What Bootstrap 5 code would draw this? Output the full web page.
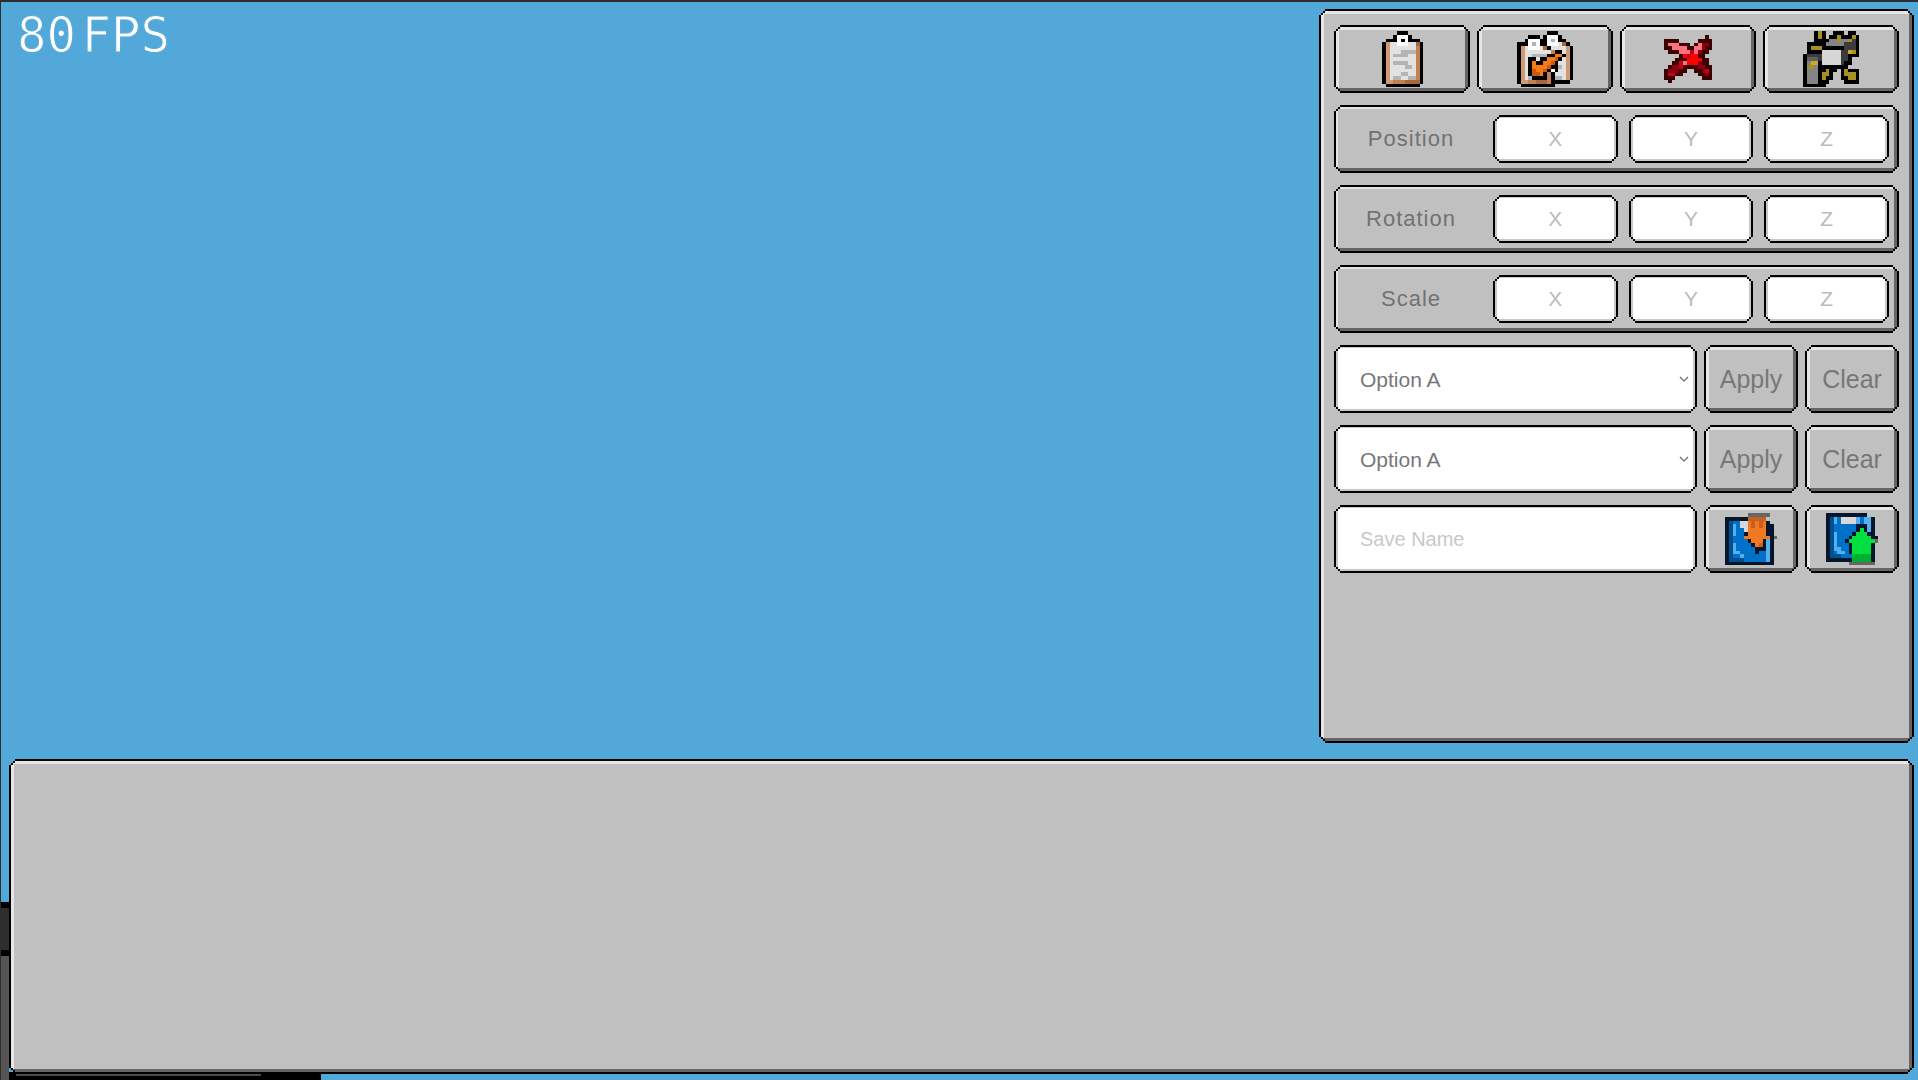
<!DOCTYPE html>
<html lang="en">
<head>
    <meta charset="UTF-8">
    <meta name="viewport" content="width=device-width, initial-scale=1.0">
    <title>Scene Editor</title>
    <link href="https://cdn.jsdelivr.net/npm/bootstrap@5.3.0/dist/css/bootstrap.min.css" rel="stylesheet">
    <style>
        body { background: #52a9d9; overflow: hidden; }

        /* canvas behind the panels, the leftover strips are part of the game view */
        .game-view {
            width: 1918px;
            height: 1080px;
            padding: 9px 4px 6px 9px;
            background:
                linear-gradient(#2d2d2d, #2d2d2d) 0 0 / 100% 2px no-repeat,
                linear-gradient(#2d2d2d, #2d2d2d) 0 0 / 1px 100% no-repeat,
                linear-gradient(#000, #000) 0 902px / 9px 6px no-repeat,
                linear-gradient(#2e2e2e, #2e2e2e) 0 908px / 9px 42px no-repeat,
                linear-gradient(#000, #000) 0 950px / 9px 6px no-repeat,
                linear-gradient(#555, #555) 0 956px / 9px 124px no-repeat,
                linear-gradient(#4a4a4a, #4a4a4a) 16px 1074px / 245px 2px no-repeat,
                linear-gradient(#000, #000) 0 1072px / 321px 8px no-repeat,
                #52a9d9;
        }

        .top-area { height: 734px; margin-bottom: 16px; }
        .fps-readout {
            font-family: "DejaVu Sans Mono", monospace;
            font-size: 49px;
            line-height: 36px;
            color: #fff;
            word-spacing: -24px;
            -webkit-text-stroke: 1px #52a9d9;
            padding: 9px 0 0 8px;
        }

        /* 9-slice frames so the corners stay stepped like the pixel art */
        .frame-raised, .btn.frame-raised {
            border: 8px solid transparent;
            border-radius: 0;
            border-image: url("data:image/svg+xml,<svg xmlns='http://www.w3.org/2000/svg' width='18' height='18' shape-rendering='crispEdges'><path d='M6 0h6v2h2v2h2v2h2v6h-2v2h-2v2h-2v2H6v-2H4v-2H2v-2H0V6h2V4h2V2h2z'/><path fill='%23666' d='M6 2h6v2h2v2h2v6h-2v2h-2v2H6v-2H4v-2H2V6h2V4h2z'/><path fill='%23e6e6e6' d='M6 2H12V4H13V13H4V12H2V6H4V4H6Z'/><rect x='5' y='5' width='8' height='8' fill='%23c0c0c0'/></svg>") 8 fill / 8px;
        }
        .frame-thin {
            border: 8px solid transparent;
            border-image: url("data:image/svg+xml,<svg xmlns='http://www.w3.org/2000/svg' width='18' height='18' shape-rendering='crispEdges'><path d='M6 0h6v2h2v2h2v2h2v6h-2v2h-2v2h-2v2H6v-2H4v-2H2v-2H0V6h2V4h2V2h2z'/><path fill='%23666' d='M6 2h6v2h2v2h2v6h-2v2h-2v2H6v-2H4v-2H2V6h2V4h2z'/><path fill='%23e6e6e6' d='M6 2H12V4H13V13H4V12H2V6H4V4H6Z'/><rect x='4' y='4' width='9' height='9' fill='%23c0c0c0'/></svg>") 8 fill / 8px;
        }
        /* no fill slice here, the select arrow sits on the background */
        .frame-sunken, .form-control.frame-sunken, .form-select.frame-sunken {
            border: 8px solid transparent;
            border-radius: 0;
            background-color: #fff;
            background-clip: padding-box;
            border-image: url("data:image/svg+xml,<svg xmlns='http://www.w3.org/2000/svg' width='18' height='18' shape-rendering='crispEdges'><path d='M6 0h6v2h2v2h2v2h2v6h-2v2h-2v2h-2v2H6v-2H4v-2H2v-2H0V6h2V4h2V2h2z'/><path fill='%23c8c8c8' d='M6 2h6v2h2v2h2v6h-2v2h-2v2H6v-2H4v-2H2V6h2V4h2z'/><path fill='%23fff' d='M6 3H12V4H14V14H4V4H6Z'/></svg>") 8 / 8px;
        }
        .form-control.frame-sunken:focus, .form-select.frame-sunken:focus { box-shadow: none; background-color: #fff; }

        .tool-panel { width: 595px; height: 734px; padding: 8px 7px; }
        .log-panel { height: 315px; }
        .panel-stack { display: flex; flex-direction: column; gap: 12px; }
        .icon-row { display: grid; grid-template-columns: repeat(4, 1fr); gap: 6.67px; }
        .icon-row .btn { height: 68px; }
        .btn.frame-raised { padding: 0; display: flex; align-items: center; justify-content: center; }

        .vector-row { height: 68px; display: flex; align-items: center; gap: 11px; padding-right: 2px; }
        .vector-label {
            width: 138px;
            margin-right: 2px;
            text-align: center;
            font: 22px "Liberation Sans", sans-serif;
            letter-spacing: 1px;
            color: #727272;
        }
        .vector-input.form-control {
            flex: 1 1 0;
            min-width: 0;
            height: 48px;
            padding: 0;
            text-align: center;
            font: 21px "Liberation Sans", sans-serif;
        }
        .vector-input::placeholder { color: #bbb; opacity: 1; }

        .action-row { display: flex; gap: 7px; height: 68px; }
        .action-field.form-select, .action-field.form-control {
            width: 363px;
            flex: 0 0 363px;
            height: 68px;
            padding: 0 18px;
            font: 21px "Liberation Sans", sans-serif;
            color: #777;
        }
        .action-field.form-select {
            background-image: url("data:image/svg+xml,<svg xmlns='http://www.w3.org/2000/svg' viewBox='0 0 10 6'><path fill='none' stroke='%23777' stroke-width='1.4' d='M1 1l4 4 4-4'/></svg>");
            background-position: right 0 center;
            background-size: 10px 6px;
        }
        .action-field.form-control { font-size: 20px; }
        .action-field::placeholder { color: #c8c8c8; opacity: 1; }
        .btn.action-btn {
            flex: 1 1 0;
            font: 25px "Liberation Sans", sans-serif;
            color: #777;
        }
        .pixel-icon { display: block; line-height: 0; }
    </style>
</head>
<body>
    <div class="game-view d-flex flex-column">
        <div class="top-area d-flex justify-content-between align-items-start">
            <div class="fps-readout">80 FPS</div>

            <div class="tool-panel frame-raised panel-stack">
                <div class="icon-row">
                    <button class="btn frame-raised" type="button" aria-label="Copy"><span class="pixel-icon" data-icon="copy"></span></button>
                    <button class="btn frame-raised" type="button" aria-label="Paste"><span class="pixel-icon" data-icon="paste"></span></button>
                    <button class="btn frame-raised" type="button" aria-label="Delete"><span class="pixel-icon" data-icon="remove"></span></button>
                    <button class="btn frame-raised" type="button" aria-label="Break"><span class="pixel-icon" data-icon="shatter"></span></button>
                </div>

                <div class="vector-row frame-thin">
                    <span class="vector-label">Position</span>
                    <input class="form-control frame-sunken vector-input" placeholder="X">
                    <input class="form-control frame-sunken vector-input" placeholder="Y">
                    <input class="form-control frame-sunken vector-input" placeholder="Z">
                </div>
                <div class="vector-row frame-thin">
                    <span class="vector-label">Rotation</span>
                    <input class="form-control frame-sunken vector-input" placeholder="X">
                    <input class="form-control frame-sunken vector-input" placeholder="Y">
                    <input class="form-control frame-sunken vector-input" placeholder="Z">
                </div>
                <div class="vector-row frame-thin">
                    <span class="vector-label">Scale</span>
                    <input class="form-control frame-sunken vector-input" placeholder="X">
                    <input class="form-control frame-sunken vector-input" placeholder="Y">
                    <input class="form-control frame-sunken vector-input" placeholder="Z">
                </div>

                <div class="action-row">
                    <select class="form-select frame-sunken action-field"><option>Option A</option><option>Option B</option></select>
                    <button class="btn frame-raised action-btn" type="button">Apply</button>
                    <button class="btn frame-raised action-btn" type="button">Clear</button>
                </div>
                <div class="action-row">
                    <select class="form-select frame-sunken action-field"><option>Option A</option><option>Option B</option></select>
                    <button class="btn frame-raised action-btn" type="button">Apply</button>
                    <button class="btn frame-raised action-btn" type="button">Clear</button>
                </div>
                <div class="action-row">
                    <input class="form-control frame-sunken action-field" placeholder="Save Name">
                    <button class="btn frame-raised action-btn" type="button" aria-label="Save"><span class="pixel-icon" data-icon="save"></span></button>
                    <button class="btn frame-raised action-btn" type="button" aria-label="Load"><span class="pixel-icon" data-icon="load"></span></button>
                </div>
            </div>
        </div>

        <div class="log-panel frame-raised"></div>
    </div>

    <script src="https://cdn.jsdelivr.net/npm/bootstrap@5.3.0/dist/js/bootstrap.bundle.min.js"></script>
    <script>
        // Pixel art, one char per cell
        const PALETTE = {
            K: '#000', W: '#fff', L: '#e2e2e2', G: '#b4b4b4',
            O: '#d29a72', M: '#c2814f', D: '#a8683c',
            A: '#f57a14', B: '#c85a10', N: '#3c0000', P: '#ff707f',
            R: '#ff0000', C: '#c8001a', E: '#8a0010',
            Y: '#a89020', H: '#c8a830', T: '#3c3c3c', S: '#606060', I: '#848484', V: '#d6d6d6',
            u: '#05152a', b: '#0070c8', l: '#50b0f0', d: '#005090', w: '#d8d8d8', s: '#666',
            o: '#f07820', e: '#c86020', g: '#00e040', f: '#00b030'
        };
        const ICONS = {
            copy: [
                '....KKK....',
                '...KWWWK...',
                '.KKKWKWKKK.',
                'KOLLWWWLLDK',
                'KOLLLLLLLMK',
                'KOLLLGGGGMK',
                'KOLGGGGLLMK',
                'KOLLLLLLLMK',
                'KOLGGGGLLMK',
                'KOLLLLGGLMK',
                'KOLLLLLLLMK',
                'KOLLLGGLLMK',
                'KOLGGLLGGMK',
                'KOOMMMDDDDK',
                '.KKKKKKKKK.'
            ],
            paste: [
                '........KKK....',
                '...KKK.KWWWK...',
                '..KWWWKKWGWKK..',
                'KKKWGWKKWWWLDK.',
                'KOLWWWLDKLLLLOK',
                'KOLLLLLLLMKKLOK',
                'KOLLGGGGKKAAKOK',
                'KOLKKLKKAABKLOK',
                'KOLKAKKAABKLLOK',
                'KOLKAAAABKKGLOK',
                'KOLKBAABKWKLLOK',
                'KOLKBBAKMKLLLOK',
                'KOLGKKKKMKGGLOK',
                'KOOMMDDDMKKKKK.',
                '.KKKKKKKKK.....'
            ],
            remove: [
                '...........N.',
                'NNNN.....NNNN',
                'NPPPNNN.NPEEN',
                'NNPPPPNNPPENN',
                '.NNNPPPCPENN.',
                '....NRCRRNN..',
                '...NNNRRRRNN.',
                '..NNCPRRRENN.',
                '.NEECNNNNEENN',
                'NEEENN..NNECN',
                'NCCNN....NNEN',
                'NNN.......NNN',
                '.N...........'
            ],
            shatter: [
                '...KYK..KKK.KK.',
                '...KYK.KKYKKKYK',
                '...KKKKIIYIIYTK',
                '.KKKKKIIIIITTTK',
                '.KYYYKKKKKKTTTK',
                '.KKKKVVVVVTTHYK',
                'KTTTTVVVVVTTKKK',
                'KSSSTVVVVVTTK..',
                'KIHHKVVVVVTKK..',
                'KYYIKKKKKKKK...',
                'KIIIKKYKK.KYKKK',
                'KIIIKYYK..KYYYK',
                'KIIIKYKK..KKYYK',
                'KIIIKKK....KKKK',
                'KKKKKK.........'
            ],
            save: [
                '......ssssss..',
                'uuuuuueeeee...',
                'udbbwwoeoeou..',
                'udlbwwoeoeouu.',
                'udlbbwooooouu.',
                'udlbbuooooouu.',
                'udbbbooooooous',
                'udbbbbuoooulu.',
                'udlbbbbuoeulu.',
                'udlbbbbbuuulu.',
                'udllbbbbubblu.',
                'udbblbbbbbblu.',
                'uddddbbbbbblu.',
                'uuuuuuuuuuuuu.'
            ],
            load: [
                'uuuuuuuuuuu...',
                'udlbwwwwlbllu.',
                'udlbwwwwlbllu.',
                'udbbbbbbuuulu.',
                'udbbbbbbugulu.',
                'udlbbbbuggguu.',
                'udlbbbuggggguu',
                'udlbbugggggggs',
                'udlbbbugggggu.',
                'udllbbugggggu.',
                'udbllbugggggu.',
                'udddbbbfffffu.',
                'uuuuuuufffffu.',
                '......sssssss.'
            ]
        };
        const CELL = 3.75;

        function drawIcon(rows) {
            const cols = Math.max(...rows.map(r => r.length));
            let rects = '';
            rows.forEach((row, y) => {
                [...row].forEach((ch, x) => {
                    if (ch !== '.') rects += `<rect x="${x}" y="${y}" width="1" height="1" fill="${PALETTE[ch]}"/>`;
                });
            });
            return `<svg width="${cols * CELL}" height="${rows.length * CELL}" viewBox="0 0 ${cols} ${rows.length}" shape-rendering="crispEdges">${rects}</svg>`;
        }

        document.querySelectorAll('.pixel-icon').forEach(el => {
            el.innerHTML = drawIcon(ICONS[el.dataset.icon]);
        });
    </script>
</body>
</html>
